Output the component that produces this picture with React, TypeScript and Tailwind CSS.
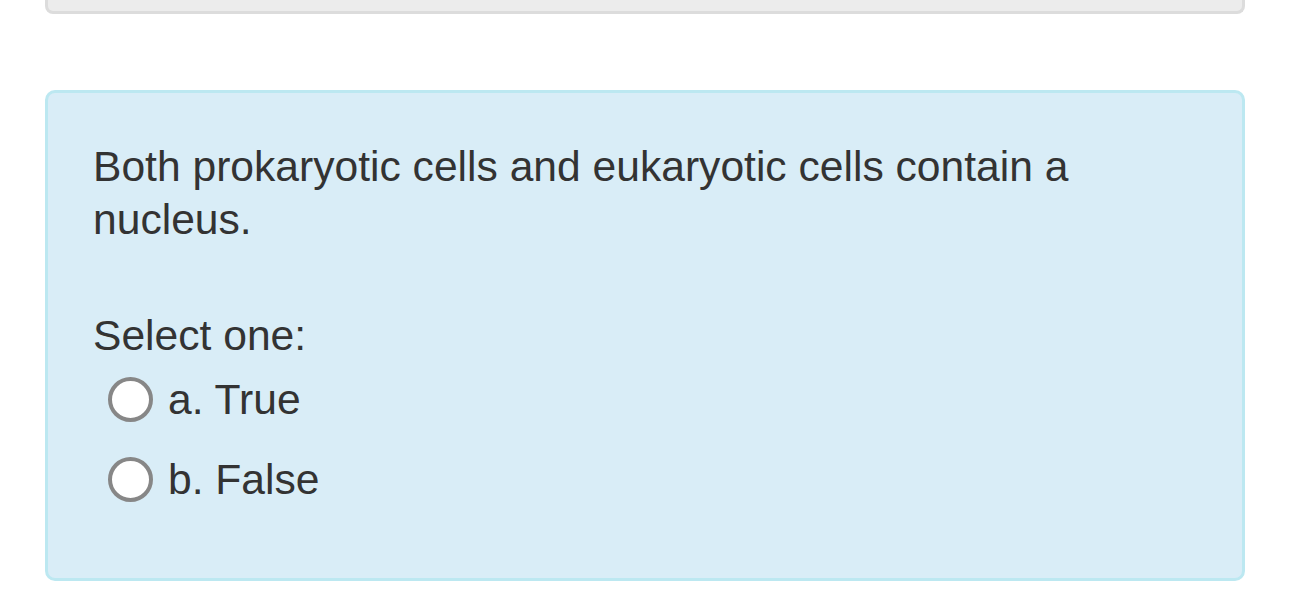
export default function App() {
  return (
    <div className="w-[1290px] h-[613px] bg-white overflow-hidden" style={{ fontFamily: '"Liberation Sans", Arial, sans-serif' }}>
      <div className="mx-[45px] w-[1200px]">
        <div className="h-[14px] bg-[#ececec] border-x-[3px] border-b-[3px] border-[#dcdcdc] rounded-b-[8px]" />
        <div className="mt-[76px] h-[491px] bg-[#d9edf7] border-[3px] border-[#bce8f1] rounded-[10px] pl-[45px] pt-[47px] text-[#333333]">
          <p className="text-[42.6px] leading-[53px] m-0 w-[1010px]">
            Both prokaryotic cells and eukaryotic cells contain a nucleus.
          </p>
          <div className="mt-[63px] text-[42.6px] leading-[53px]">Select one:</div>
          <div className="flex flex-col gap-[27px] mt-[11px] pl-[15px]">
            <label className="flex items-center gap-[15px] text-[42.6px] leading-[53px]">
              <span className="w-[45px] h-[45px] rounded-full border-[4.5px] border-[#878787] bg-white shrink-0" />
              <span>a. True</span>
            </label>
            <label className="flex items-center gap-[15px] text-[42.6px] leading-[53px]">
              <span className="w-[45px] h-[45px] rounded-full border-[4.5px] border-[#878787] bg-white shrink-0" />
              <span>b. False</span>
            </label>
          </div>
        </div>
      </div>
    </div>
  );
}
